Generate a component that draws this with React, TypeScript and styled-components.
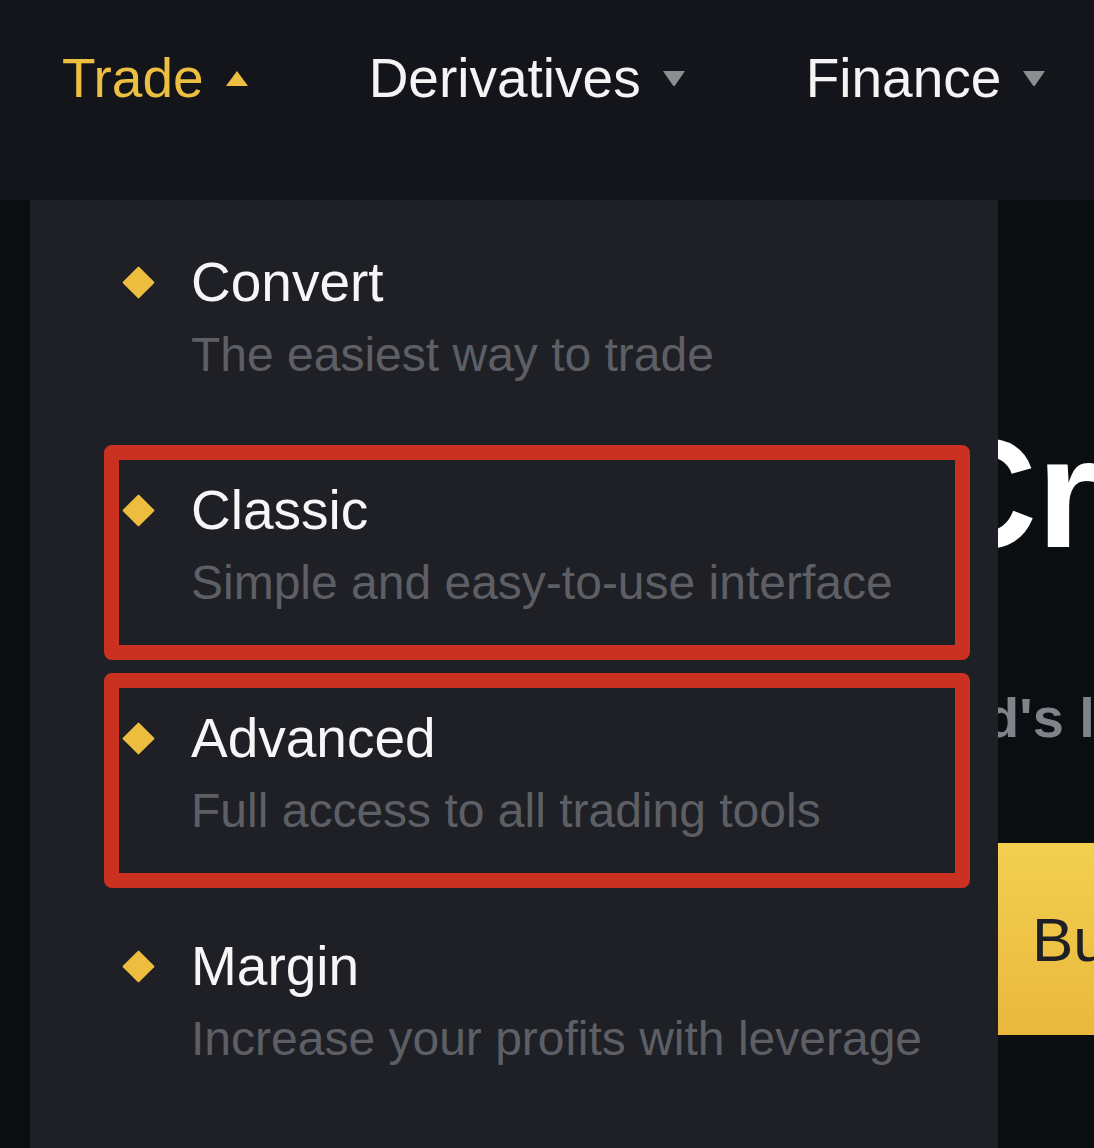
import React from "react";
import styled, { createGlobalStyle } from "styled-components";

const Global = createGlobalStyle`
  html, body {
    margin: 0;
    padding: 0;
    background: #0b0e11;
    overflow: hidden;
  }
  body {
    font-family: "Liberation Sans", Arial, sans-serif;
  }
  * { box-sizing: border-box; }
`;

const Page = styled.div`
  width: 1094px;
  height: 1148px;
  display: flex;
  flex-direction: column;
  background: #0b0e11;
  overflow: hidden;
`;

const NavBar = styled.nav`
  height: 200px;
  flex: none;
  background: #14151a;
  display: flex;
  align-items: flex-start;
  gap: 120px;
  padding: 45px 0 0 62px;
`;

const NavItem = styled.div<{ $active?: boolean }>`
  display: flex;
  align-items: center;
  gap: 21px;
  font-size: 55px;
  line-height: 66px;
  font-weight: 400;
  color: ${(p) => (p.$active ? "#ecbe42" : "#f4f4f5")};
  white-space: nowrap;
`;

const Caret = styled.svg`
  width: 24px;
  height: 17px;
  flex: none;
`;

const Body = styled.main`
  position: relative;
  flex: 1;
  overflow: hidden;
`;

const Hero = styled.section`
  display: flex;
  flex-direction: column;
  align-items: flex-start;
  padding: 201px 0 0 860px;
  white-space: nowrap;
`;

const HeroTitle = styled.h1<{ $indent: number }>`
  margin: 0 0 0 ${(p) => p.$indent}px;
  font-size: 155px;
  line-height: 186px;
  font-weight: 700;
  color: #ffffff;
`;

const HeroSub = styled.p<{ $indent: number }>`
  margin: 0 0 0 ${(p) => p.$indent}px;
  padding-top: 98px;
  font-size: 56px;
  line-height: 66px;
  font-weight: 700;
  color: #7f838a;
`;

const HeroButton = styled.button<{ $indent: number }>`
  margin: 92px 0 0 ${(p) => p.$indent}px;
  height: 192px;
  border: none;
  padding: 0 60px 0 52px;
  background: linear-gradient(180deg, #f3d04f 0%, #e9b83c 100%);
  color: #1e2026;
  font-family: "Liberation Sans", Arial, sans-serif;
  font-size: 62px;
  font-weight: 500;
  text-align: left;
`;

const Dropdown = styled.div`
  position: absolute;
  top: 0;
  left: 30px;
  width: 968px;
  bottom: 0;
  background: #1f2026;
  padding: 45px 0 0 92px;
  display: flex;
  flex-direction: column;
  gap: 82px;
`;

const MenuItem = styled.div`
  position: relative;
  display: flex;
  align-items: flex-start;
  gap: 36px;
`;

const DiamondCell = styled.div`
  width: 33px;
  height: 74px;
  display: flex;
  align-items: center;
  justify-content: center;
  flex: none;
`;

const Diamond = styled.span`
  width: 23px;
  height: 23px;
  background: #edbd40;
  transform: rotate(45deg);
  border-radius: 1px;
`;

const TextCol = styled.div`
  display: flex;
  flex-direction: column;
`;

const ItemTitle = styled.div`
  font-size: 55px;
  line-height: 74px;
  color: #f6f6f7;
  white-space: nowrap;
`;

const ItemDesc = styled.div`
  font-size: 48px;
  line-height: 72px;
  color: #5d5f65;
  white-space: nowrap;
`;

const Highlight = styled.div`
  position: absolute;
  top: -28px;
  left: -18px;
  width: 866px;
  height: 215px;
  border: 15px solid #cb3120;
  border-radius: 8px;
  pointer-events: none;
`;

const UpCaret = () => (
  <Caret viewBox="0 0 24 17">
    <path d="M12 1 L23 16 L1 16 Z" fill="#ecbe42" />
  </Caret>
);

const DownCaret = () => (
  <Caret viewBox="0 0 24 17">
    <path d="M1 1 L23 1 L13 15.5 Q12 16.5 11 15.5 Z" fill="#8b8e93" />
  </Caret>
);

const items = [
  { title: "Convert", desc: "The easiest way to trade", marked: false },
  { title: "Classic", desc: "Simple and easy-to-use interface", marked: true },
  { title: "Advanced", desc: "Full access to all trading tools", marked: true },
  { title: "Margin", desc: "Increase your profits with leverage", marked: false },
];

export default function App() {
  return (
    <>
      <Global />
      <Page>
        <NavBar>
          <NavItem $active>
            Trade
            <UpCaret />
          </NavItem>
          <NavItem>
            Derivatives
            <DownCaret />
          </NavItem>
          <NavItem>
            Finance
            <DownCaret />
          </NavItem>
        </NavBar>
        <Body>
          <Hero>
            <HeroTitle $indent={65}>Crypto</HeroTitle>
            <HeroSub $indent={10}>world's largest</HeroSub>
            <HeroButton $indent={120}>Buy Now</HeroButton>
          </Hero>
          <Dropdown>
            {items.map((it) => (
              <MenuItem key={it.title}>
                <DiamondCell>
                  <Diamond />
                </DiamondCell>
                <TextCol>
                  <ItemTitle>{it.title}</ItemTitle>
                  <ItemDesc>{it.desc}</ItemDesc>
                </TextCol>
                {it.marked && <Highlight />}
              </MenuItem>
            ))}
          </Dropdown>
        </Body>
      </Page>
    </>
  );
}
